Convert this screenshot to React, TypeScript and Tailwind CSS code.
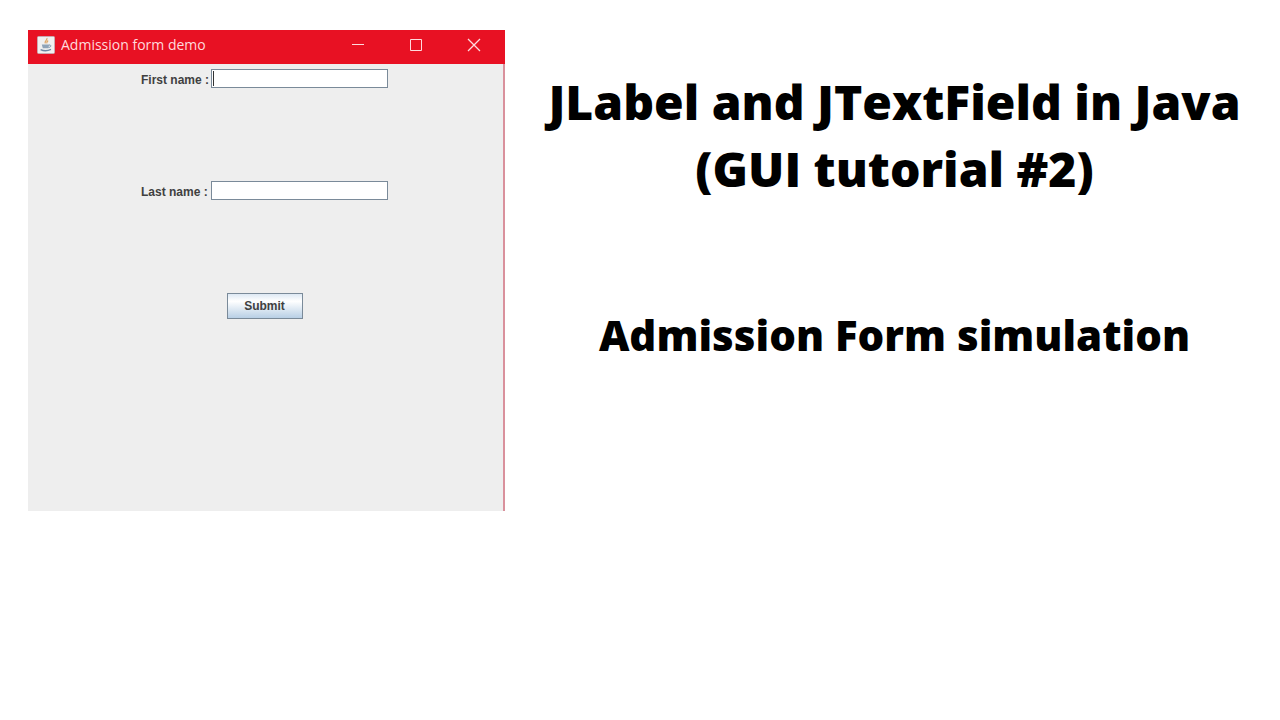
const fields = [
  { id: "first-name", label: "First name :", active: true },
  { id: "last-name", label: "Last name :", active: false },
]

function JavaIcon() {
  return (
    <svg viewBox="0 0 18 18" className="h-[18px] w-[18px]" aria-hidden="true">
      <rect x=".5" y=".5" width="17" height="17" rx="1" fill="#f1f0f0" stroke="#c9a9b0" />
      <path d="M9.8 2.2c1.4 1.8-3.2 2.6-1.4 5.2M11.2 4.6c-1.8.9-1.6 1.7-1.3 2.8" fill="none" stroke="#dda25e" strokeWidth="1.2" />
      <path d="M4.8 8.6h7.4l-.8 3.6H5.8z" fill="#8fa3b8" />
      <path d="M12 9c2.6-.4 2.4 2.2-.4 2.5" fill="none" stroke="#7890a8" />
      <path d="M3.6 13.6c2.6 1.2 7.4 1.2 10.4-.2" fill="none" stroke="#6d87a3" strokeWidth="1.4" />
    </svg>
  )
}

function TitleBar() {
  return (
    <header className="flex h-[34px] items-center bg-[#e81123] pb-1 pl-[9px] text-[#ffdadd]">
      <JavaIcon />
      <h2 className="ml-[6px] flex-1 font-['Open_Sans',sans-serif] text-sm">Admission form demo</h2>
      <button type="button" aria-label="Minimize" className="flex h-full w-[58px] items-center justify-center">
        <svg viewBox="0 0 14 14" className="h-[14px] w-[14px]" stroke="currentColor" fill="none">
          <path d="M1 6.5h12" />
        </svg>
      </button>
      <button type="button" aria-label="Maximize" className="flex h-full w-[58px] items-center justify-center">
        <svg viewBox="0 0 14 14" className="h-[14px] w-[14px]" stroke="currentColor" fill="none">
          <path d="M1.5 1.5h11v11h-11z" />
        </svg>
      </button>
      <button type="button" aria-label="Close" className="mr-[2px] flex h-full w-[58px] items-center justify-center">
        <svg viewBox="0 0 14 14" className="h-[14px] w-[14px]" stroke="currentColor" strokeWidth="1.3" fill="none">
          <path d="M1 1l12 12M13 1L1 13" />
        </svg>
      </button>
    </header>
  )
}

export default function App() {
  return (
    <main className="flex min-h-screen bg-white text-black">
      <section className="mt-[30px] ml-[28px] w-[477px] self-start bg-[#eeeeee]">
        <TitleBar />
        <form className="flex flex-col items-center border-r-2 border-[#d9919c] pt-[5px] pr-[2px] pb-48 font-['Liberation_Sans',Arial,sans-serif] text-xs font-bold text-[#404040]">
          {fields.map((field) => (
            <div key={field.id} className="mb-[93px] flex items-center">
              <label htmlFor={field.id} className="w-[70px] pt-[2px]">
                {field.label}
              </label>
              <div className="relative flex">
                <input
                  id={field.id}
                  type="text"
                  className="h-[19px] w-[177px] border border-[#7a8a99] bg-white px-1 outline-none"
                />
                {field.active && <span className="absolute top-[2px] left-[2px] h-[15px] w-px bg-[#333333]" />}
              </div>
            </div>
          ))}
          <button
            type="submit"
            className="h-[26px] w-[76px] border border-[#7a8a99] bg-linear-to-b from-[#dde8f3] via-white via-30% to-[#b8cfe5]"
          >
            Submit
          </button>
        </form>
      </section>
      <section className="flex-1 pt-[68px] pl-1 text-center font-['Open_Sans',sans-serif] font-extrabold">
        <h1 className="text-5xl leading-[67px]">
          JLabel and JTextField in Java
          <br />
          (GUI tutorial #2)
        </h1>
        <p className="mt-[104px] text-[42px] leading-[58px]">Admission Form simulation</p>
      </section>
    </main>
  )
}
